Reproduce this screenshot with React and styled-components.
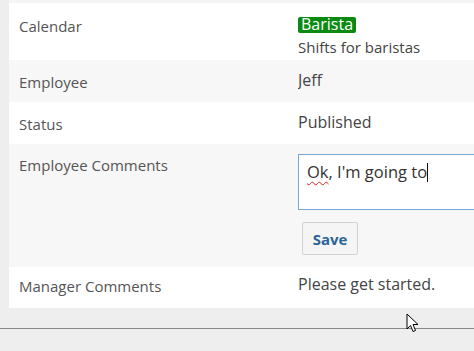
import React from 'react'
import styled, { createGlobalStyle } from 'styled-components'

const Global = createGlobalStyle`
  html, body {
    margin: 0;
    padding: 0;
    background: #eeeeee;
    font-family: "Open Sans", "Noto Sans", sans-serif;
  }
`

const Page = styled.div`
  position: relative;
  width: 474px;
  height: 351px;
  overflow: hidden;
  background: #eeeeee;
`

const Panel = styled.div`
  margin-left: 9px;
  padding-top: 3px;
  background: #f4f4f4;
`

const Row = styled.div`
  display: grid;
  grid-template-columns: 289px 1fr;
  background: ${p => (p.shaded ? '#f7f7f7' : '#ffffff')};
  min-height: ${p => p.h || 42}px;
  box-sizing: border-box;
`

const Label = styled.div`
  padding: ${p => p.top || 12}px 0 0 10px;
  font-size: 15px;
  line-height: 20px;
  color: #555;
`

const Value = styled.div`
  padding: ${p => p.top || 10}px 0 ${p => p.bottom || 0}px 0;
  font-size: 16px;
  line-height: 20px;
  color: #444;
  overflow: hidden;
`

const Badge = styled.span`
  display: inline-block;
  background: #0b8a12;
  color: #fff;
  font-size: 16px;
  line-height: 15px;
  padding: 0 3px 1px 3px;
  border-radius: 2px;
`

const Sub = styled.div`
  margin-top: 4px;
  font-size: 15px;
  line-height: 18px;
`

const TextBox = styled.div`
  width: 190px;
  height: 56px;
  box-sizing: border-box;
  border: 1px solid #7aa7d6;
  border-right: none;
  background: #fff;
  padding: 6px 0 0 8px;
  font-size: 16.5px;
  line-height: 22px;
  color: #333;
`

const Squiggle = styled.span`
  text-decoration: underline wavy #d22;
  text-decoration-thickness: 1px;
  text-underline-offset: 3px;
`

const Caret = styled.span`
  display: inline-block;
  width: 1px;
  height: 19px;
  background: #111;
  vertical-align: -4px;
`

const SaveButton = styled.button`
  margin: 12px 0 0 4px;
  width: 56px;
  height: 33px;
  border: 1px solid #d2d2d2;
  border-radius: 2px;
  background: #f5f5f5;
  color: #2c6497;
  font-family: "Open Sans", "Noto Sans", sans-serif;
  font-weight: 700;
  font-size: 15px;
  padding: 0;
`

const Footer = styled.div`
  height: 44px;
  background: #eeeeee;
  margin-left: -9px;
  padding-top: 20px;
  box-sizing: border-box;
`

const Rule = styled.div`
  height: 1px;
  background: #8a8a8a;
`

const Cursor = styled.svg`
  position: absolute;
  left: 406px;
  top: 313px;
`

export default function App() {
  return (
    <Page>
      <Global />
      <Panel>
        <Row h={57}>
          <Label top={13}>Calendar</Label>
          <Value top={11}>
            <Badge>Barista</Badge>
            <Sub>Shifts for baristas</Sub>
          </Value>
        </Row>
        <Row shaded>
          <Label>Employee</Label>
          <Value>Jeff</Value>
        </Row>
        <Row>
          <Label>Status</Label>
          <Value>Published</Value>
        </Row>
        <Row shaded h={122}>
          <Label top={11}>Employee Comments</Label>
          <Value top={10} bottom={12}>
            <TextBox>
              <Squiggle>Ok</Squiggle>, I'm going to<Caret />
            </TextBox>
            <SaveButton>Save</SaveButton>
          </Value>
        </Row>
        <Row h={41}>
          <Label top={9}>Manager Comments</Label>
          <Value top={7}>Please get started.</Value>
        </Row>
        <Footer>
          <Rule />
        </Footer>
      </Panel>
      <Cursor width="13" height="20" viewBox="0 0 13 20">
        <path d="M1 1 L1 16 L4.5 12.5 L7 18.5 L9.5 17.5 L7 11.5 L12 11.5 Z" fill="#fff" stroke="#000" strokeWidth="1" strokeLinejoin="round" />
      </Cursor>
    </Page>
  )
}
